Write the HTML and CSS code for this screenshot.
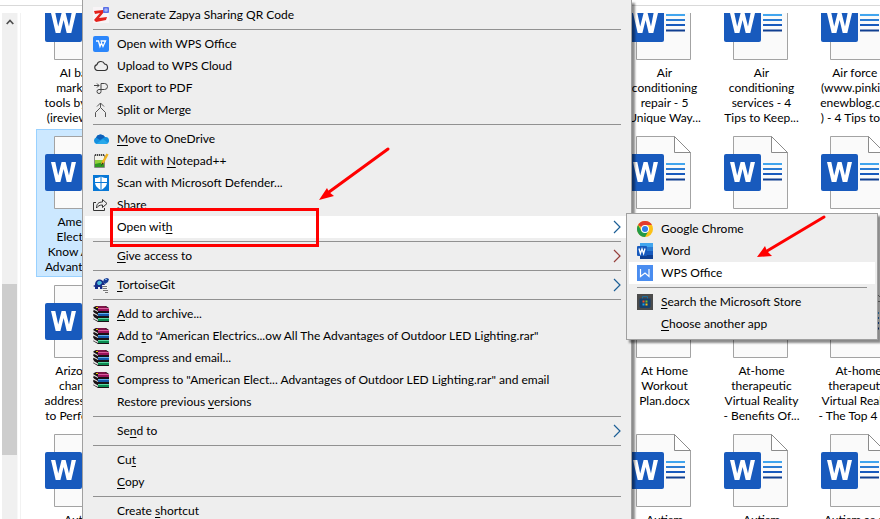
FILE: index.html
```
<!DOCTYPE html>
<html lang="en">
<head>
<meta charset="utf-8">
<title>Documents</title>
<link rel="stylesheet" href="styles.css">
</head>
<body>
<svg class="defs" aria-hidden="true">
  <symbol id="doc" viewBox="0 0 73 73">
    <path d="M9.500.5H47.500L63.500 16.500V72.500H9.500Z" fill="#fafafa" stroke="#a3a3a3"/>
    <path d="M47.500.5V16.500H63.500Z" fill="#fff" stroke="#8b8b8b"/>
    <path d="M39 28h19" stroke="#41a5ee" stroke-width="2"/>
    <path d="M39 33h19" stroke="#2b7cd3" stroke-width="2"/>
    <path d="M39 38h19" stroke="#185abd" stroke-width="2"/>
    <path d="M39 43.500h19" stroke="#103f91" stroke-width="2"/>
    <rect x="0" y="18" width="37" height="37" rx="2" fill="#185abd"/>
    <path d="M6 26h4.300l2.900 13.500L16.600 26h4l3.400 13.500L26.600 26H31l-4.700 20h-4.600L18.600 33 15.400 46h-4.700z" fill="#fff"/>
  </symbol>
  <symbol id="rar" viewBox="0 0 16 16">
    <path d="M1 1l2-1h10l3 2v14H5l-5-3v-1l1-1-1-2 1-2-1-2 1-1-1-2z" fill="#1a1216"/>
    <path d="M0 2l5 3v1L0 3.500zM0 6l5 3v1L0 7.500zM0 10.500l5 3v1.500L0 12.500z" fill="#e4e4e4"/>
    <path d="M3 0h9l3 2H6z" fill="#7d1648"/>
    <path d="M5 2h11v1H5z" fill="#d95a9c"/><path d="M5 3h11v2H5z" fill="#98135a"/>
    <path d="M5 7h11v1H5z" fill="#63b2ee"/><path d="M5 8h11v2H5z" fill="#1359aa"/>
    <path d="M5 12h11v1H5z" fill="#5ad9a4"/><path d="M5 13h11v2H5z" fill="#0b8a50"/>
    <path d="M3 1h2v1H3z" fill="#e3c400"/>
  </symbol>
  <symbol id="chev" viewBox="0 0 8 14"><path d="M1 1l6 6-6 6" fill="none" stroke="currentColor" stroke-width="1.2"/></symbol>
</svg>

<main class="explorer">
  <div class="scrollbar" aria-hidden="true">
    <svg class="arrow" viewBox="0 0 8 6"><path d="M.7 5L4 1.500 7.300 5" fill="none" stroke="#505050" stroke-width="1.700"/></svg>
    <div class="thumb"></div>
  </div>
  <div class="viewport">
    <ul class="files">
      <li class="file c1"><svg><use href="#doc"/></svg><span>AI based<br>marketing<br>tools by Brand<br>(ireviews.com</span></li>
      <li class="file c7"><svg><use href="#doc"/></svg><span>Air<br>conditioning<br>repair - 5<br>Unique Way...</span></li>
      <li class="file c8"><svg><use href="#doc"/></svg><span>Air<br>conditioning<br>services - 4<br>Tips to Keep...</span></li>
      <li class="file c9"><svg><use href="#doc"/></svg><span>Air force -<br>(www.pinkiest<br>enewblog.com<br>) - 4 Tips to J...</span></li>

      <li class="file c1 selected"><svg><use href="#doc"/></svg><span>American<br>Electrics -<br>Know All The<br>Advantages of</span></li>
      <li class="file c7"><svg><use href="#doc"/></svg></li>
      <li class="file c8"><svg><use href="#doc"/></svg></li>
      <li class="file c9"><svg><use href="#doc"/></svg></li>

      <li class="file c1"><svg><use href="#doc"/></svg><span>Arizona to<br>changing<br>address - How<br>to Perform a...</span></li>
      <li class="file c7"><svg><use href="#doc"/></svg><span>At Home<br>Workout<br>Plan.docx</span></li>
      <li class="file c8"><svg><use href="#doc"/></svg><span>At-home<br>therapeutic<br>Virtual Reality<br>- Benefits Of...</span></li>
      <li class="file c9"><svg><use href="#doc"/></svg><span>At-home<br>therapeutic<br>Virtual Reality<br>- The Top 4 O...</span></li>

      <li class="file c1"><svg><use href="#doc"/></svg><span>Autism</span></li>
      <li class="file c7"><svg><use href="#doc"/></svg><span>Autism</span></li>
      <li class="file c8"><svg><use href="#doc"/></svg><span>Autism</span></li>
      <li class="file c9"><svg><use href="#doc"/></svg><span>Autism as a c</span></li>
    </ul>
  </div>
</main>

<div class="menu main-menu" role="menu">
  <button class="item" role="menuitem"><svg class="icon" viewBox="0 0 16 16"><rect width="16" height="16" fill="#f8f4f6"/><path d="M1 4l9-1 1 2-5 6 8-1-1 3-10 2-2-2 6-7-5 1z" fill="#e3221c"/><rect x="10" y="0" width="6" height="6" rx="1" fill="#5a70e6"/><rect x="12" y="2" width="2" height="2" fill="none" stroke="#dfe4ff" stroke-width=".7"/></svg><span>Generate Zapya Sharing QR Code</span></button>
  <hr>
  <button class="item" role="menuitem"><svg class="icon" viewBox="0 0 16 16"><rect width="16" height="16" rx="2" fill="#2b86fb"/><path d="M3 5h2.500L7 10.500 8.500 7l1.500 3.500L12.500 5H7.500" fill="none" stroke="#fff" stroke-width="1.300"/></svg><span>Open with WPS Office</span></button>
  <button class="item" role="menuitem"><svg class="icon" viewBox="0 0 16 16"><path d="M4.500 12.500a3 3 0 0 1-.5-5.900 4 4 0 0 1 7.600-.6 3.300 3.300 0 0 1 .4 6.500z" fill="none" stroke="#333" stroke-width="1.100"/></svg><span>Upload to WPS Cloud</span></button>
  <button class="item" role="menuitem"><svg class="icon" viewBox="0 0 16 16"><path d="M1 5.500h5M4 3.500l2 2-2 2M8 3.500h3.500a3 3 0 0 1 0 6H6a2 2 0 1 0 2 2V3.500" fill="none" stroke="#444"/></svg><span>Export to PDF</span></button>
  <button class="item" role="menuitem"><svg class="icon" viewBox="0 0 16 16"><path d="M7.500 1v4.500M4 4.500L7.500 1 11 4.500M2.500 15v-4.500l5-5 5 5V15" fill="none" stroke="#555"/></svg><span>Split or Merge</span></button>
  <hr>
  <button class="item" role="menuitem"><svg class="icon" viewBox="0 0 16 16"><path d="M3.500 13a3.500 3.500 0 0 1-.5-6.500A5 5 0 0 1 12 6a3.500 3.500 0 0 1 1 7z" fill="#1490df"/><path d="M3 6.500A5 5 0 0 1 12 6L7 9z" fill="#0f5fb8"/><path d="M3 13l7-5 5 4-2 1z" fill="#28a8ea"/></svg><span><u>M</u>ove to OneDrive</span></button>
  <button class="item" role="menuitem"><svg class="icon" viewBox="0 0 16 16"><path d="M1.500 2h10v12.500h-10z" fill="#f4f4ec" stroke="#888"/><path d="M2 7h9v7H2z" fill="#8fd03a"/><path d="M2 11l9-2v5H2z" fill="#2f9a20"/><path d="M2 2h9" stroke="#444" stroke-width="2" stroke-dasharray="1 1"/><path d="M14.500 1L9 11" stroke="#edb320" stroke-width="2.500"/><path d="M9.500 9.500L8 13l2.500-2.500z" fill="#222"/></svg><span>Edit with <u>N</u>otepad++</span></button>
  <button class="item" role="menuitem"><svg class="icon" viewBox="0 0 16 16"><rect width="16" height="16" fill="#0878d6"/><path d="M8 1.500c2 1.500 4 1.500 6 1.500v4c0 4-3 6.500-6 8-3-1.500-6-4-6-8V3c2 0 4 0 6-1.500z" fill="#fff"/><path d="M8 1v14M1 7.500h14" stroke="#0878d6"/></svg><span>Scan with Microsoft Defender...</span></button>
  <button class="item" role="menuitem"><svg class="icon" viewBox="0 0 16 16"><path d="M3 5.500H.5v8h11V11M3.500 11c0-4 2-6 6-6V2.500L14 6.500l-4.500 4V8c-3 0-4.500 1-6 3z" fill="none" stroke="#333"/></svg><span>Share</span></button>
  <button class="item active" role="menuitem" aria-haspopup="true"><span class="icon"></span><span>Open wit<u>h</u></span><svg class="chev blue"><use href="#chev"/></svg></button>
  <hr>
  <button class="item" role="menuitem" aria-haspopup="true"><span class="icon"></span><span><u>G</u>ive access to</span><svg class="chev red"><use href="#chev"/></svg></button>
  <hr>
  <button class="item" role="menuitem" aria-haspopup="true"><svg class="icon" viewBox="0 0 16 16"><path d="M0 9l2-1c0-7 8-7 9-2l1 2-2 2v2H7v-2H5v2H2v-2z" fill="#172c86"/><path d="M4 6c1-3 4-3 5 0L7 8H5z" fill="#49b7d8"/><path d="M10 5l1-3 3-1 2 1-1 3-3 2z" fill="#183a94"/><path d="M12 2h2v1h-2z" fill="#6fa8e8"/><path d="M9 8h6v8h-5z" fill="#f4f4f4"/><path d="M9 9.500h5M10 11.500h4M10 13.500h5M12 15.500h3" stroke="#777"/></svg><span><u>T</u>ortoiseGit</span><svg class="chev blue"><use href="#chev"/></svg></button>
  <hr>
  <button class="item" role="menuitem"><svg class="icon"><use href="#rar"/></svg><span><u>A</u>dd to archive...</span></button>
  <button class="item" role="menuitem"><svg class="icon"><use href="#rar"/></svg><span>Add <u>t</u>o "American Electrics...ow All The Advantages of Outdoor LED Lighting.rar"</span></button>
  <button class="item" role="menuitem"><svg class="icon"><use href="#rar"/></svg><span>Compress and email...</span></button>
  <button class="item" role="menuitem"><svg class="icon"><use href="#rar"/></svg><span>Compress to "American Elect... Advantages of Outdoor LED Lighting.rar" and email</span></button>
  <button class="item" role="menuitem"><span class="icon"></span><span>Restore previous <u>v</u>ersions</span></button>
  <hr>
  <button class="item" role="menuitem" aria-haspopup="true"><span class="icon"></span><span>Se<u>n</u>d to</span><svg class="chev blue"><use href="#chev"/></svg></button>
  <hr>
  <button class="item" role="menuitem"><span class="icon"></span><span>Cu<u>t</u></span></button>
  <button class="item" role="menuitem"><span class="icon"></span><span><u>C</u>opy</span></button>
  <hr>
  <button class="item" role="menuitem"><span class="icon"></span><span>Create <u>s</u>hortcut</span></button>
</div>

<div class="menu sub-menu" role="menu">
  <button class="item" role="menuitem"><svg class="icon" viewBox="0 0 16 16"><circle cx="8" cy="8" r="8" fill="#fbc116"/><path d="M8 8L1.070 4A8 8 0 0 1 14.930 4H8z" fill="#e33b2e"/><path d="M1.070 4A8 8 0 0 0 8 16l3.500-6L8 8 4.500 10z" fill="#229a48"/><circle cx="8" cy="8" r="4" fill="#fff"/><circle cx="8" cy="8" r="3" fill="#2f7de9"/></svg><span>Google Chrome</span></button>
  <button class="item" role="menuitem"><svg class="icon" viewBox="0 0 16 16"><path d="M3 0h13v4H3z" fill="#41a5ee"/><path d="M3 4h13v4H3z" fill="#2b7cd3"/><path d="M3 8h13v4H3z" fill="#185abd"/><path d="M3 12h13v4H3z" fill="#103f91"/><rect y="3" width="10" height="10" rx="1" fill="#185abd"/><path d="M2 5.500l1.400 5L5 6l1.600 4.500L8 5.500" fill="none" stroke="#fff" stroke-width="1.300"/></svg><span>Word</span></button>
  <button class="item active" role="menuitem"><svg class="icon" viewBox="0 0 16 16"><rect width="16" height="16" fill="#4a8df0"/><path d="M3.500 4v7.500L8 8l4 3.500V4" fill="none" stroke="#fff" stroke-width="1.200"/></svg><span>WPS Office</span></button>
  <hr>
  <button class="item" role="menuitem"><svg class="icon" viewBox="0 0 16 16"><rect width="16" height="16" fill="#4b4b4b"/><path d="M5.500 5V2.500h5V5" fill="none" stroke="#1c6c9c"/><path d="M2.500 4.500h11v8l-1 1.500h-9l-1-1.500z" fill="#153f6c"/><path d="M5.500 6.500h2v2h-2z" fill="#f05028"/><path d="M8.500 6.500h2v2h-2z" fill="#80bd20"/><path d="M5.500 9.500h2v2h-2z" fill="#18a5ec"/><path d="M8.500 9.500h2v2h-2z" fill="#ffbd10"/></svg><span><u>S</u>earch the Microsoft Store</span></button>
  <button class="item" role="menuitem"><span class="icon"></span><span><u>C</u>hoose another app</span></button>
</div>

<div class="highlight"></div>
<svg class="pointer first" viewBox="0 0 74 58" aria-hidden="true"><path d="M71 4L12 47" stroke="#f00" stroke-width="3" stroke-linecap="round"/><path d="M2 55L10 43l2 4 5 4z" fill="#f00"/></svg>
<svg class="pointer second" viewBox="0 0 74 48" aria-hidden="true"><path d="M71 4L14 38" stroke="#f00" stroke-width="3" stroke-linecap="round"/><path d="M4 44L12 33l2 5 5 5z" fill="#f00"/></svg>
</body>
</html>
```
FILE: styles.css
```
* { box-sizing: border-box; }

body {
  margin: 0;
  height: 100vh;
  overflow: hidden;
  background: #fff;
  color: #000;
  font: 12px/15px Lato, "Open Sans", sans-serif;
}

.defs { display: none; }

.explorer {
  display: flex;
  height: 100vh;
  padding-top: 13px;
  background: linear-gradient(#fff 5px, #d9d9d9 5px, #d9d9d9 6px, #fff 6px);
}

.scrollbar {
  flex: none;
  width: 18px;
  border-left: 2px solid #fff;
  border-right: 1px solid #f8f8f8;
  background: #f0f0f0;
}

.arrow {
  display: block;
  width: 8px;
  height: 6px;
  margin: 6px 4px 0;
}

.thumb {
  height: 171px;
  margin-top: 259px;
  background: #cdcdcd;
}

.viewport {
  flex: 1;
  margin-left: 2px;
  padding-left: 15px;
  border-left: 1px solid #f2f2f2;
  overflow: hidden;
}

.files {
  display: grid;
  grid-template-columns: repeat(9, 93px);
  grid-auto-rows: 148px;
  gap: 1px 4px;
  margin: -33px 0 0;
  padding: 0;
  list-style: none;
}

.file {
  display: flex;
  flex-direction: column;
  gap: 5px;
  padding: 7px 0 0 9px;
  text-align: center;
  white-space: nowrap;
}

.file svg { width: 73px; height: 73px; }
.file span { margin-left: -9px; }

.c1 { grid-column: 1; }
.c7 { grid-column: 7; }
.c8 { grid-column: 8; }
.c9 { grid-column: 9; }

.selected {
  background: #cce8ff;
  outline: 1px solid #99d1ff;
  outline-offset: -1px;
}

.menu {
  position: absolute;
  padding: 4px 2px;
  border: 1px solid #a0a0a0;
  background: #eee;
  box-shadow: 3px 3px 2px rgba(0, 0, 0, 0.45);
}

.main-menu {
  top: 0;
  left: 82px;
  width: 550px;
  border-top: 0;
}

.sub-menu {
  top: 213px;
  left: 626px;
  width: 252px;
}

.item {
  display: flex;
  align-items: center;
  gap: 8px;
  width: 100%;
  height: 22px;
  padding: 0 8px;
  border: 0;
  background: none;
  color: inherit;
  font: inherit;
  text-align: left;
  white-space: nowrap;
}

.item.active { background: #fff; }
.item span { padding-bottom: 2px; }
.item u { text-underline-offset: 2px; }
.icon { flex: none; width: 16px; height: 16px; }

.chev {
  width: 8px;
  height: 14px;
  margin-left: auto;
}

.blue { color: #1c5f96; }
.red { color: #96403c; }

.menu hr {
  height: 1px;
  margin: 3px 8px;
  border: 0;
  background: #919191;
}

.highlight {
  position: absolute;
  top: 208px;
  left: 110px;
  width: 209px;
  height: 39px;
  border: 3px solid #f00;
}

.pointer { position: absolute; }
.first { top: 145px; left: 317px; width: 74px; height: 58px; }
.second { top: 213px; left: 753px; width: 74px; height: 48px; }
```
